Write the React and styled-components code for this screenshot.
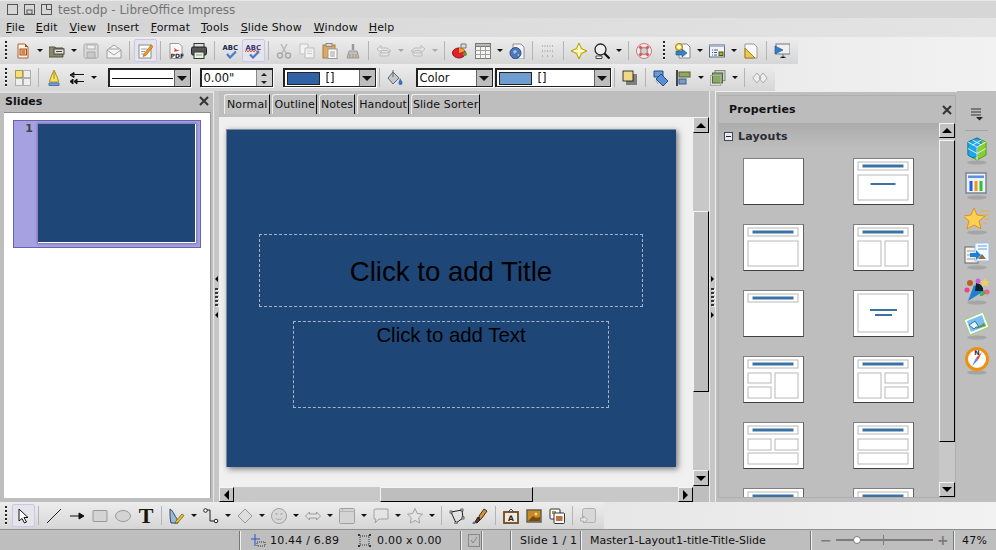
import React from "react";
import styled, { createGlobalStyle } from "styled-components";

const Global = createGlobalStyle`
  html, body { margin: 0; padding: 0; }
  body { width: 996px; height: 550px; overflow: hidden; font-family: "DejaVu Sans", sans-serif; font-size: 11px; color: #111; }
`;

const Window = styled.div`
  width: 996px;
  height: 550px;
  display: flex;
  flex-direction: column;
  overflow: hidden;
  background: #bebebe;
`;

const TitleBar = styled.div`
  height: 18px;
  display: flex;
  align-items: center;
  gap: 6px;
  padding-left: 7px;
  background: #d6d6d6;
  border-top: 1px solid #e8e8e8;
  box-sizing: border-box;
`;

const WinButton = styled.svg`
  width: 11px;
  height: 11px;
`;

const TitleText = styled.span`
  font-size: 12px;
  color: #747474;
`;

const MenuBar = styled.div`
  height: 19px;
  display: flex;
  align-items: center;
  padding-left: 6px;
  background: linear-gradient(90deg, #d2d2d2, #dcdcdc 45%, #e4e4e4);
`;

const MenuItem = styled.span`
  margin-right: ${(p) => p.$gap}px;
  font-size: 11px;
  letter-spacing: 0.1px;
  u { text-underline-offset: 1px; }
`;

const ToolRow = styled.div`
  flex: none;
  height: ${(p) => p.$height}px;
  background: linear-gradient(90deg, #dedede, #e6e6e6 60%, #f2f2f2);
`;

const Toolbar = styled.div`
  height: 100%;
  width: ${(p) => p.$width}px;
  display: flex;
  align-items: center;
  padding-left: 3px;
  box-sizing: border-box;
  background: linear-gradient(#ededed, #d6d6d6);
`;

const Grip = styled.div`
  flex: none;
  width: 2px;
  height: 20px;
  margin: 0 ${(p) => p.$right}px 0 ${(p) => p.$left}px;
  background: repeating-linear-gradient(#222 0 2px, #f4f4f4 2px 3px, transparent 3px 4px);
`;

const Tool = styled.div`
  flex: none;
  width: 23px;
  height: 23px;
  box-sizing: border-box;
  display: flex;
  align-items: center;
  justify-content: center;
  border: 1px solid ${(p) => (p.$on ? "#c9c9e6" : "transparent")};
  border-radius: 2px;
  background: ${(p) => (p.$on ? "#e4e4ea" : "transparent")};
`;

const ToolGlyph = styled.span`
  font-family: "Liberation Serif", serif;
  font-size: 22px;
  font-weight: bold;
  line-height: 16px;
  color: #1a1608;
`;

const Arrow = styled.div`
  flex: none;
  width: 11px;
  display: flex;
  justify-content: center;
  &::after {
    content: "";
    border-left: 3.5px solid transparent;
    border-right: 3.5px solid transparent;
    border-top: 3.5px solid ${(p) => (p.$off ? "#aaa" : "#111")};
  }
`;

const Sep = styled.div`
  flex: none;
  width: 8px;
  height: 19px;
  display: flex;
  justify-content: center;
  &::after {
    content: "";
    width: 1px;
    background: #b4b4b4;
  }
`;

const Field = styled.div`
  flex: none;
  width: ${(p) => p.$width}px;
  height: 19px;
  margin-left: ${(p) => p.$left || 0}px;
  box-sizing: border-box;
  display: flex;
  align-items: center;
  background: #fff;
  border: 1px solid #222;
  border-top-width: 2px;
  border-left-width: 2px;
  box-shadow: 1px 1px 0 #fff;
  font-size: 11.5px;
`;

const FieldBody = styled.div`
  flex: 1;
  min-width: 0;
  display: flex;
  align-items: center;
  gap: 6px;
  padding-left: 2px;
`;

const DropButton = styled.div`
  flex: none;
  width: 15px;
  height: 100%;
  display: flex;
  align-items: center;
  justify-content: center;
  background: #bdbdbd;
  border-left: 1px solid #666;
  &::after {
    content: "";
    border-left: 5px solid transparent;
    border-right: 5px solid transparent;
    border-top: 5px solid #111;
  }
`;

const SpinButtons = styled.div`
  flex: none;
  width: 15px;
  height: 100%;
  display: flex;
  flex-direction: column;
  background: #d0d0d0;
  border-left: 1px solid #888;
`;

const SpinPart = styled.div`
  flex: 1;
  display: flex;
  align-items: center;
  justify-content: center;
  &::after {
    content: "";
    border-left: 3px solid transparent;
    border-right: 3px solid transparent;
    ${(p) => (p.$up ? "border-bottom: 3px solid #222;" : "border-top: 3px solid #222;")}
  }
`;

const Swatch = styled.div`
  width: ${(p) => p.$width}px;
  height: 11px;
  background: ${(p) => p.$color};
  border: 1px solid #222;
`;

const LineSample = styled.div`
  flex: 1;
  height: 1px;
  background: #111;
  margin-right: 1px;
`;

const Main = styled.div`
  flex: none;
  height: 411px;
  display: flex;
`;

const SlidesPanel = styled.aside`
  flex: none;
  width: 213px;
  display: flex;
  flex-direction: column;
  border-top: 2px solid #e0e0e0;
  padding-right: 1px;
  box-sizing: border-box;
`;

const PanelHead = styled.div`
  height: 19px;
  display: flex;
  align-items: center;
  justify-content: space-between;
  padding: 0 3px 3px 5px;
  box-sizing: border-box;
  font-weight: bold;
  font-size: 11px;
`;

const CloseMark = styled.svg`
  width: 10px;
  height: 10px;
`;

const SlideList = styled.div`
  height: 386px;
  margin-left: 4px;
  margin-right: 1px;
  padding: 7px 9px;
  box-sizing: border-box;
  background: #fff;
  border-top: 1px solid #8c8c8c;
  border-right: 1px solid #9a9a9a;
`;

const SlideItem = styled.div`
  width: 188px;
  height: 128px;
  box-sizing: border-box;
  display: flex;
  justify-content: space-between;
  padding: 3px 4px 0 0;
  background: #a6a1e1;
  border: 1px solid #6a62b4;
`;

const SlideNum = styled.span`
  width: 19px;
  text-align: right;
  color: #444;
  font-weight: bold;
  font-size: 11px;
  line-height: 10px;
`;

const SlideThumb = styled.div`
  width: 158px;
  height: 119px;
  box-sizing: border-box;
  background: #1e4778;
  border-right: 1px solid #fff;
  border-bottom: 1px solid #fff;
  box-shadow: 0 0 2px 1px #7a76a8;
`;

const Splitter = styled.div`
  flex: none;
  width: 6px;
  display: flex;
  flex-direction: column;
  align-items: center;
  justify-content: center;
  gap: 2px;
  background: #c6c6c6;
  border-left: 1px solid #e8e8e8;
  box-sizing: border-box;
`;

const SplitDot = styled.div`
  width: 3px;
  height: 2px;
  background: #333;
  box-shadow: 1px 1px 0 #f0f0f0;
`;

const SplitArrow = styled.div`
  margin: ${(p) => (p.$end ? "4px 0 0" : "0 0 4px")};
  border-top: 3px solid transparent;
  border-bottom: 3px solid transparent;
  ${(p) => (p.$right ? "border-left: 3px solid #000;" : "border-right: 3px solid #000;")}
`;

const Center = styled.div`
  flex: none;
  width: 490px;
  display: flex;
  flex-direction: column;
`;

const TabBar = styled.div`
  height: 26px;
  display: flex;
  align-items: flex-end;
  gap: 2px;
  padding: 0 0 3px 5px;
  box-sizing: border-box;
`;

const Tab = styled.div`
  height: 20px;
  box-sizing: border-box;
  padding: 0 ${(p) => (p.$on ? 2 : 1)}px;
  display: flex;
  align-items: center;
  font-size: 11px;
  letter-spacing: 0.1px;
  background: ${(p) => (p.$on ? "#c4c4c4" : "#bebebe")};
  border-top: 1px solid #eee;
  border-left: 1px solid #eee;
  border-right: 1px solid #111;
  border-top-left-radius: 3px;
`;

const CenterBody = styled.div`
  height: 370px;
  display: flex;
`;

const Viewport = styled.div`
  flex: none;
  width: 474px;
  padding: 12px 0 0 7px;
  box-sizing: border-box;
  background: #f0f0f0;
`;

const Slide = styled.div`
  width: 450px;
  height: 338px;
  box-sizing: border-box;
  display: flex;
  flex-direction: column;
  align-items: center;
  padding: 104px 1px 0 0;
  gap: 14px;
  background: #1e4778;
  border-top: 1px solid #7c8aa0;
  border-left: 1px solid #7c8aa0;
  box-shadow: 2px 2px 6px #777;
`;

const Placeholder = styled.div`
  width: ${(p) => p.$width}px;
  height: ${(p) => p.$height}px;
  box-sizing: border-box;
  display: flex;
  justify-content: center;
  align-items: ${(p) => (p.$top ? "flex-start" : "center")};
  padding-top: ${(p) => p.$pad}px;
  border: 1px dashed #a6b4c8;
  font-family: "Liberation Sans", Arial, sans-serif;
  font-size: ${(p) => p.$size}px;
  color: #000;
`;

const VScroll = styled.div`
  flex: none;
  width: ${(p) => p.$width}px;
  height: ${(p) => p.$height}px;
  display: flex;
  flex-direction: column;
  background: #c8c8c8;
`;

const HScroll = styled.div`
  height: 15px;
  width: 474px;
  display: flex;
  background: #c8c8c8;
`;

const ScrollButton = styled.div`
  flex: none;
  width: ${(p) => p.$w}px;
  height: ${(p) => p.$h}px;
  box-sizing: border-box;
  display: flex;
  align-items: center;
  justify-content: center;
  background: #c2c2c2;
  border: 1px solid;
  border-color: #f4f4f4 #000 #000 #f4f4f4;
  &::after {
    content: "";
    ${(p) =>
      ({
        up: "border-left:5px solid transparent;border-right:5px solid transparent;border-bottom:5px solid #000;",
        down: "border-left:5px solid transparent;border-right:5px solid transparent;border-top:5px solid #000;",
        left: "border-top:5px solid transparent;border-bottom:5px solid transparent;border-right:5px solid #000;",
        right: "border-top:5px solid transparent;border-bottom:5px solid transparent;border-left:5px solid #000;",
      })[p.$dir]}
  }
`;

const VTrack = styled.div`
  flex: 1;
  display: flex;
  flex-direction: column;
  padding-top: ${(p) => p.$before}px;
  padding-bottom: ${(p) => p.$after}px;
`;

const ScrollThumb = styled.div`
  flex: 1;
  background: #bebebe;
  border: 1px solid;
  border-color: #f4f4f4 #000 #000 #f4f4f4;
`;

const HTrack = styled.div`
  flex: 1;
  display: flex;
  padding-left: ${(p) => p.$before}px;
  padding-right: ${(p) => p.$after}px;
`;

const Deck = styled.section`
  flex: none;
  width: 242px;
  display: flex;
  flex-direction: column;
  border-left: 1px solid #eee;
  border-top: 1px solid #eee;
  padding: 3px 1px 4px 2px;
  box-sizing: border-box;
`;

const DeckFrame = styled.div`
  flex: 1;
  min-height: 0;
  display: flex;
  flex-direction: column;
  border: 1px solid #aeaeae;
`;

const DeckHead = styled.div`
  flex: none;
  height: 27px;
  display: flex;
  align-items: center;
  justify-content: space-between;
  padding: 0 3px 0 10px;
  font-weight: bold;
  font-size: 11px;
  letter-spacing: 0.2px;
  background: #bcbcbc;
`;

const DeckBody = styled.div`
  flex: 1;
  min-height: 0;
  display: flex;
`;

const DeckContent = styled.div`
  flex: 1;
  min-width: 0;
  overflow: hidden;
`;

const SectionHead = styled.div`
  height: 26px;
  display: flex;
  align-items: center;
  gap: 5px;
  padding-left: 5px;
  font-weight: bold;
  font-size: 11px;
  letter-spacing: 0.2px;
  color: #2c2c34;
  background: linear-gradient(#acacac, #bebebe);
`;

const Minus = styled.div`
  width: 9px;
  height: 9px;
  box-sizing: border-box;
  display: flex;
  align-items: center;
  justify-content: center;
  background: #e6ecf2;
  border: 1px solid #445;
  &::after {
    content: "";
    width: 5px;
    height: 1px;
    background: #223;
  }
`;

const LayoutGrid = styled.div`
  display: grid;
  grid-template-columns: 61px 61px;
  grid-auto-rows: 47px;
  column-gap: 49px;
  row-gap: 19px;
  padding: 9px 0 0 24px;
`;

const LayoutThumb = styled.svg`
  width: 61px;
  height: 47px;
  display: block;
  box-sizing: border-box;
  background: #fff;
  border: 1px solid;
  border-color: #808080 #606060 #404040 #808080;
`;

const SideTabs = styled.nav`
  flex: none;
  width: 39px;
  display: flex;
  flex-direction: column;
  align-items: center;
  padding-top: 16px;
  box-sizing: border-box;
`;

const SideRule = styled.div`
  width: 23px;
  height: 1px;
  margin: 9px 0 6px;
  background: #a4a4a4;
`;

const SideIcon = styled.svg`
  width: 26px;
  height: 28px;
  margin-bottom: 7px;
`;

const StatusBar = styled.footer`
  flex: none;
  height: 21px;
  display: flex;
  align-items: center;
  background: #bebebe;
  border-top: 1px solid #8e8e8e;
  box-sizing: border-box;
  font-size: 11px;
`;

const Cell = styled.div`
  flex: none;
  width: ${(p) => p.$width}px;
  height: 19px;
  box-sizing: border-box;
  display: flex;
  align-items: center;
  padding-left: ${(p) => p.$pad || 0}px;
  letter-spacing: ${(p) => (p.$tight ? 0 : 0.2)}px;
  border-right: ${(p) => (p.$plain ? "none" : "1px solid #f0f0f0")};
  box-shadow: ${(p) => (p.$plain ? "none" : "inset -1px 0 0 #777")};
`;

const StatusIcon = styled.svg`
  flex: none;
  margin-left: ${(p) => p.$left || 0}px;
`;

const StatusText = styled.span`
  margin-left: ${(p) => p.$left}px;
`;

const ZoomRail = styled.div`
  flex: none;
  width: 97px;
  height: 2px;
  margin: 0 4px;
  position: relative;
  background: #7c7c7c;
`;

const ZoomKnob = styled.div`
  position: absolute;
  left: 17px;
  top: -3px;
  width: 8px;
  height: 8px;
  border-radius: 50%;
  background: #fff;
  border: 1px solid #7c7c7c;
  box-sizing: border-box;
`;

const ZoomTick = styled.div`
  position: absolute;
  left: 47px;
  top: -4px;
  width: 1px;
  height: 10px;
  background: #7c7c7c;
`;

const ZoomSign = styled.span`
  width: 12px;
  text-align: center;
  font-size: 14px;
  font-weight: bold;
  color: #7c7c7c;
  line-height: 1;
`;

const paths = {
  new: (
    <>
      <path d="M3 1h7l3 3v11H3z" fill="#fbf4ea" stroke="#b0602a" />
      <path d="M10 1l3 3h-3z" fill="#8c4a20" />
      <rect x="5" y="6" width="6.500" height="6" fill="#f0c090" stroke="#a8501c" />
      <path d="M6.500 8h3.500M6.500 10h3.500" stroke="#a8501c" />
    </>
  ),
  open: (
    <>
      <path d="M0 4h6l1 1h7v9H0z" fill="#8a8a6a" stroke="#55553f" />
      <rect x="5" y="6" width="10" height="5" fill="#e4e4dc" stroke="#444" />
      <path d="M7 8.500h6" stroke="#444" />
    </>
  ),
  save: (
    <>
      <rect x="1" y="1" width="14" height="14" rx="1.500" fill="#dcdcdc" stroke="#a8a8a8" />
      <rect x="4" y="2" width="8" height="4" fill="#f0f0f0" stroke="#b0b0b0" />
      <rect x="4" y="9" width="8" height="6" fill="#c8c8c8" stroke="#a8a8a8" />
    </>
  ),
  mail: (
    <>
      <path d="M1 7l7-5 7 5v8H1z" fill="#f4f4f4" stroke="#a0a0a0" />
      <path d="M1 7l7 5 7-5M3 6h10" fill="none" stroke="#a0a0a0" />
    </>
  ),
  edit: (
    <>
      <rect x="2" y="2" width="12" height="13" fill="#fff" stroke="#8a8a8a" />
      <path d="M4 6h6M4 8.500h4M4 11h3" stroke="#a0a0a0" />
      <path d="M7 11l7-9 2 1.500-7 9-3 1z" fill="#f09a1c" stroke="#9a5a10" strokeWidth="0.600" />
    </>
  ),
  pdf: (
    <>
      <path d="M2 0.500h9l3 3v12H2z" fill="#fafafa" stroke="#9a9a9a" />
      <path d="M4 2c3 4 5 5 8 6-3 0-4 0-6 1 1-2 1-4-2-7z" fill="#e04030" />
      <text x="2.500" y="14.500" fontSize="6" fontWeight="bold" fontFamily="DejaVu Sans" fill="#222">PDF</text>
    </>
  ),
  print: (
    <>
      <rect x="3" y="0.500" width="10" height="5" fill="#ddd" stroke="#333" />
      <rect x="0.500" y="4" width="15" height="8" rx="1.500" fill="#555" stroke="#222" />
      <rect x="3" y="9" width="10" height="6.500" fill="#e4f0e0" stroke="#333" />
      <path d="M5 12h6" stroke="#7ab070" />
    </>
  ),
  abc: (
    <>
      <text x="0.500" y="7" fontSize="6.800" fontWeight="bold" fontFamily="DejaVu Sans" fill="#1a2a50">ABC</text>
      <path d="M5 11l3 3.500 6-6" fill="none" stroke="#4a7ac8" strokeWidth="2.200" />
    </>
  ),
  abc2: (
    <>
      <text x="0.500" y="6.500" fontSize="6.800" fontWeight="bold" fontFamily="DejaVu Sans" fill="#3a3a70">ABC</text>
      <path d="M0 8.500l1.500-1 1.500 1 1.500-1 1.500 1 1.500-1 1.500 1 1.500-1 1.500 1 1.500-1" fill="none" stroke="#d03030" />
      <path d="M5 11.500l3 3 6-6" fill="none" stroke="#4a7ac8" strokeWidth="2.200" />
    </>
  ),
  cut: (
    <>
      <path d="M5 1l5 9M11 1l-5 9" stroke="#b8b8b8" strokeWidth="1.500" />
      <circle cx="4" cy="12.500" r="2.500" fill="none" stroke="#a8a8a8" strokeWidth="1.400" />
      <circle cx="12" cy="12.500" r="2.500" fill="none" stroke="#a8a8a8" strokeWidth="1.400" />
    </>
  ),
  copy: (
    <>
      <path d="M1 1h8v10H1z" fill="#f2f2f2" stroke="#c0c0c0" />
      <path d="M6 5h9v10H6z" fill="#f2f2f2" stroke="#bcbcbc" />
      <path d="M8 8h5M8 10.500h5" stroke="#ccc" />
    </>
  ),
  paste: (
    <>
      <rect x="1" y="2" width="12" height="13" fill="#e0a860" stroke="#a87a40" />
      <rect x="4" y="0.500" width="6" height="3" fill="#d8d8d8" stroke="#888" />
      <rect x="6" y="6" width="9" height="9.500" fill="#fff" stroke="#999" />
      <path d="M8 9h5M8 11h5M8 13h5" stroke="#999" />
    </>
  ),
  clone: (
    <>
      <path d="M8 1v6" stroke="#999" strokeWidth="2.500" />
      <path d="M4 8h8l2 7H2z" fill="#c8bcb0" stroke="#999" />
      <path d="M5 11v4M8 11v4M11 11v4" stroke="#999" />
    </>
  ),
  undo: <path d="M1 6l4-3.500V5h6l4 3-2 1-2-1.500H5V10z M4 10h7l2-1v3l-2 1H4z" fill="#e4e4e4" stroke="#bcbcbc" />,
  redo: <path d="M15 6l-4-3.500V5H5L1 8l2 1 2-1.500h6V10z M12 10H5L3 9v3l2 1h7z" fill="#e4e4e4" stroke="#bcbcbc" />,
  chart: (
    <>
      <ellipse cx="7" cy="10" rx="6.500" ry="5" fill="#e0202c" stroke="#901018" />
      <path d="M7 10V5a6.500 5 0 0 1 6 3z" fill="#f0a020" />
      <path d="M9 1h5v4H9z" fill="#ddd" stroke="#777" />
      <circle cx="13" cy="11" r="2" fill="#50a040" />
    </>
  ),
  table: (
    <>
      <rect x="0.500" y="0.500" width="15" height="15" fill="#f6f6f0" stroke="#777" />
      <rect x="0.500" y="0.500" width="15" height="3" fill="#b8b8b0" stroke="#777" />
      <path d="M5.500 3.500v12M10.500 3.500v12M0.500 7.500h15M0.500 11.500h15" stroke="#a0a0a0" />
    </>
  ),
  link: (
    <>
      <path d="M4 1h8l3 3v12H4z" fill="#f4f4f4" stroke="#909090" />
      <circle cx="6.500" cy="10" r="5.500" fill="#4a78b8" stroke="#2a5088" />
      <path d="M4 8l3-1 1 2-3 2zM8 12l2-1v2z" fill="#a8c4e8" />
    </>
  ),
  grid: (
    <path
      d="M2 3h1M7 3h1M12 3h1M2 8h1M7 8h1M12 8h1M2 13h1M7 13h1M12 13h1M4.500 3h1M9.500 3h1M4.500 8h1M9.500 8h1"
      stroke="#888"
      strokeWidth="1"
    />
  ),
  spark: (
    <>
      <path d="M8 0l2.500 5.500L16 8l-5.500 2.500L8 16l-2.500-5.500L0 8l5.500-2.500z" fill="#f8e860" stroke="#b09a10" />
      <path d="M8 3v10M3 8h10" stroke="#fffbd0" strokeWidth="2" />
    </>
  ),
  zoom: (
    <>
      <circle cx="6.500" cy="6.500" r="5.500" fill="#eee" stroke="#222" strokeWidth="1.300" />
      <path d="M10.500 10.500l5 5" stroke="#111" strokeWidth="2.200" />
      <path d="M2 13h6v2.500H2z" fill="#fff" stroke="#444" />
    </>
  ),
  help: (
    <>
      <circle cx="8" cy="8" r="6.500" fill="none" stroke="#f4ecec" strokeWidth="3" />
      <path d="M3.400 3.400l2.200 2.200M12.600 3.400l-2.200 2.200M3.400 12.600l2.200-2.200M12.600 12.600l-2.200-2.200" stroke="#e85050" strokeWidth="2.800" />
      <circle cx="8" cy="8" r="7.500" fill="none" stroke="#a05050" strokeWidth="0.700" />
      <circle cx="8" cy="8" r="3.500" fill="#d0d0d0" stroke="#a05050" strokeWidth="0.700" />
    </>
  ),
  nav: (
    <>
      <path d="M4 1h8l3 3v11H4z" fill="#f8f8f8" stroke="#888" />
      <circle cx="4" cy="4" r="3.500" fill="#f8d840" stroke="#a08010" />
      <path d="M4 2v4M2 4h4" stroke="#fff" strokeWidth="1.400" />
      <path d="M1 8h6V6l5 4-5 4v-2H1z" fill="#3a80c8" stroke="#1c5090" strokeWidth="0.600" />
    </>
  ),
  dialog: (
    <>
      <rect x="0.500" y="2" width="15" height="12" fill="#f4f4f8" stroke="#5a6a80" />
      <path d="M0.500 2h15v2h-15z" fill="#a8b8cc" />
      <path d="M3 7h1M3 9.500h1M3 12h1" stroke="#3060a0" />
      <path d="M5 7h4M5 9.500h3M5 12h3" stroke="#3060a0" />
      <rect x="10" y="9" width="4" height="3.500" fill="#b8b020" stroke="#505010" />
    </>
  ),
  master: (
    <>
      <path d="M2 1h9l3 3v11H2z" fill="#f8f8f8" stroke="#9a9a9a" />
      <path d="M2 5v10h10z" fill="#ecc850" stroke="#a08020" />
    </>
  ),
  show: (
    <>
      <rect x="2" y="1" width="14" height="10" fill="#f0f0f0" stroke="#6a7a88" />
      <path d="M1 3l8 4-8 4z" fill="#2f80c8" stroke="#1a4a80" strokeWidth="0.600" />
      <path d="M9 11v2M6 15l3-2 3 2" stroke="#6a7a88" />
    </>
  ),
  tiles: (
    <>
      <rect x="0.500" y="0.500" width="7" height="7" fill="#f6e070" stroke="#a89a50" />
      <rect x="8.500" y="0.500" width="7" height="7" fill="#eee" stroke="#b0b0b0" />
      <rect x="0.500" y="8.500" width="7" height="7" fill="#eee" stroke="#b0b0b0" />
      <rect x="8.500" y="8.500" width="7" height="7" fill="#eee" stroke="#b0b0b0" />
    </>
  ),
  pen: (
    <>
      <path d="M8 0l3.500 8 1 4h-9l1-4z" fill="#f8e060" stroke="#a89020" />
      <path d="M8 2v7" stroke="#a89020" />
      <path d="M3 13h10v2.500H3z" fill="#7aa0d8" stroke="#4a70a8" />
    </>
  ),
  arrows: <path d="M1 5l4-2.500v2h10M1 5l4 2.500v-2M1 11.500l3-2.500 0 5zM5 11.500l3-2.500v5zM8 11.500h7" fill="#111" stroke="#111" />,
  bucket: (
    <>
      <path d="M6 2L1 8l5 6 6-6z" fill="#c0c8cc" stroke="#667" />
      <path d="M6 0v7" stroke="#667" />
      <path d="M13 8c1.500 2.500 2.500 3.500 2.500 5a2 2 0 0 1-4 0c0-1.500 1-2.500 1.500-5z" fill="#3a70b8" />
    </>
  ),
  shade: (
    <>
      <rect x="4" y="4" width="11" height="11" fill="#555" opacity="0.700" />
      <rect x="1" y="1" width="10" height="10" fill="#f0d888" stroke="#111" strokeWidth="0.800" />
    </>
  ),
  turn: (
    <>
      <path d="M1 1h9v6H1z" fill="#6a9ad0" stroke="#1f4f90" />
      <path d="M8 4l7 7-5 5-7-7z" fill="#5a8ed0" stroke="#1f4f90" />
      <path d="M3 10l2 4" stroke="#9ab" />
    </>
  ),
  align: (
    <>
      <path d="M1 0v16" stroke="#111" strokeWidth="1.500" />
      <rect x="3" y="2" width="11" height="5" fill="#90a860" stroke="#506030" />
      <rect x="3" y="9" width="7" height="5" fill="#7a9ac8" stroke="#3a5a88" />
    </>
  ),
  arrange: (
    <>
      <rect x="5" y="0.500" width="10" height="10" fill="#ccc" stroke="#888" />
      <rect x="2.500" y="3" width="10" height="10" fill="#8aa868" stroke="#506838" />
      <rect x="0.500" y="5.500" width="10" height="10" fill="none" stroke="#aaa" />
    </>
  ),
  connect: <path d="M5 3L0.800 8 5 13l4-5z M11 3L7 8l4 5 4.200-5z" fill="#eee" stroke="#aaa" />,
  cursor: <path d="M4 1v12l3-2.500 2.500 4.500 2-1-2.500-4.500h4z" fill="#fff" stroke="#111" />,
  line: <path d="M1 15L15 1" stroke="#222" />,
  lineArrow: <path d="M1 8h9M10 5l5 3-5 3z" fill="#111" stroke="#111" />,
  rect: <rect x="1" y="2.500" width="14" height="11" rx="0.500" fill="#d4d4d4" stroke="#999" />,
  ellipse: <ellipse cx="8" cy="8" rx="7.500" ry="5.500" fill="#d4d4d4" stroke="#999" />,
  curve: (
    <>
      <path d="M1 1c0 6 0 10 1 14h7c0-4-2-5-4-9C4 4 3 2 1 1z" fill="#9ab8d8" stroke="#33475e" />
      <path d="M7 13l6-7 2 1.500-6 7-3 1z" fill="#f0c010" stroke="#443" strokeWidth="0.600" />
    </>
  ),
  connector: (
    <>
      <path d="M3 2h4v11h6" fill="none" stroke="#222" />
      <circle cx="2.500" cy="2.500" r="1.800" fill="#fff" stroke="#222" />
      <circle cx="13" cy="13" r="1.800" fill="#fff" stroke="#222" />
    </>
  ),
  diamond: <path d="M8 1l7 7-7 7-7-7z" fill="#ddd" stroke="#999" />,
  smile: (
    <>
      <circle cx="8" cy="8" r="7.500" fill="#d8d8d8" stroke="#a0a0a0" />
      <circle cx="5.500" cy="6" r="1" fill="#aaa" />
      <circle cx="10.500" cy="6" r="1" fill="#aaa" />
      <path d="M4.500 10c2 2 5 2 7 0" fill="none" stroke="#aaa" />
    </>
  ),
  double: <path d="M0.500 8l4-4v2h7V4l4 4-4 4v-2h-7v2z" fill="#e4e4e4" stroke="#999" />,
  card: (
    <>
      <rect x="0.500" y="0.500" width="15" height="15" rx="1" fill="#d4d4d4" stroke="#a0a0a0" />
      <path d="M0.500 3.500h15M3.500 0.500v3" stroke="#b4b4b4" />
    </>
  ),
  callout: <path d="M2 1h13v10H6l-4 4 1-4H1V2z" fill="#e4e4e4" stroke="#a0a0a0" />,
  star: <path d="M8 0.500l2.300 5 5.200.700-3.800 3.600 1 5.200L8 12.500 3.300 15l1-5.200L.5 6.200l5.200-.700z" fill="#e4e4e4" stroke="#a0a0a0" />,
  points: (
    <>
      <path d="M2 4l11-2 1 8-7 5z" fill="none" stroke="#222" />
      <rect x="1" y="3" width="2" height="2" fill="#fff" stroke="#111" strokeWidth="0.600" />
      <rect x="12" y="1" width="2" height="2" fill="#fff" stroke="#111" strokeWidth="0.600" />
      <rect x="13" y="9" width="2" height="2" fill="#fff" stroke="#111" strokeWidth="0.600" />
      <rect x="6" y="14" width="2" height="2" fill="#fff" stroke="#111" strokeWidth="0.600" />
    </>
  ),
  glue: (
    <>
      <path d="M7 8l5-7 3 2-5 7-2 2z" fill="#d89030" stroke="#332" />
      <path d="M6 9l2 3-3 3-2-1z" fill="#7a2a1a" stroke="#221" />
      <circle cx="2" cy="15" r="1.500" fill="#4a7ac0" />
    </>
  ),
  frame: (
    <>
      <rect x="1" y="4" width="14" height="11" fill="#f0e8d8" stroke="#6a4a28" strokeWidth="1.800" />
      <path d="M5 4l3-3 3 3" fill="none" stroke="#444" />
      <text x="8" y="12.700" textAnchor="middle" fontSize="7.500" fontWeight="bold" fontFamily="DejaVu Sans" fill="#222">A</text>
    </>
  ),
  photo: (
    <>
      <rect x="1" y="2" width="14" height="12" fill="#c88a28" stroke="#5a5a50" strokeWidth="1.400" />
      <path d="M2 13l5-5 3 2 4-1v4z" fill="#7a4a14" />
      <circle cx="10" cy="6" r="1.500" fill="#f4e060" />
    </>
  ),
  stack: (
    <>
      <rect x="1" y="1" width="10" height="10" rx="1" fill="#fff" stroke="#333" />
      <rect x="3" y="3" width="4" height="3" fill="#b89040" />
      <rect x="5" y="5" width="10.500" height="10.500" rx="1" fill="#fff" stroke="#333" />
      <rect x="7" y="8" width="6.500" height="5" fill="#c07040" />
    </>
  ),
  ghost: (
    <>
      <rect x="2.500" y="0.500" width="13" height="14" rx="2" fill="#d8d8d8" stroke="#b0b0b0" />
      <path d="M0.500 10h3V8l4 3.500-4 3.500v-2h-3z" fill="#e4e4e4" stroke="#b0b0b0" />
    </>
  ),
};

const sidePaths = [
  <>
    <path d="M13 1l9 4v13l-9 5-9-5V5z" fill="#84d030" stroke="#58a018" />
    <path d="M13 1L4 5v13l5 3 4-2V10l4-3V3z" fill="#1ea8ea" stroke="#0f78b8" />
    <path d="M4 5l9 5 9-5M13 10v13M4 11.500l9 5 9-5M8.500 3l9 5M17.500 3l-9 5" fill="none" stroke="#e8f6ff" strokeWidth="0.900" />
  </>,
  <>
    <rect x="2" y="1" width="20" height="20" fill="#f0f2f8" stroke="#7a8498" strokeWidth="1.500" />
    <rect x="4" y="3.500" width="16" height="2.500" fill="#5a90e0" />
    <path d="M7 9v10" stroke="#2060e0" strokeWidth="3" />
    <path d="M12 9v10" stroke="#f09a10" strokeWidth="3" />
    <path d="M17 9v10" stroke="#30c030" strokeWidth="3" />
  </>,
  <>
    <path d="M10 1l3 7 8 1-6 5 2 8-7-4-7 4 2-8-6-5 8-1z" fill="#fcd050" stroke="#e09020" />
    <path d="M16 4h9M18 8h7M20 12h5M19 16h4" stroke="#f0a840" />
  </>,
  <>
    <rect x="1" y="5" width="13" height="16" fill="#f4f4f4" stroke="#666" />
    <path d="M3 9h8M3 13h4M3 17h8" stroke="#999" />
    <rect x="11" y="1" width="14" height="18" fill="#f4f8ff" stroke="#a0c0e8" />
    <path d="M14 4h9M14 7h9" stroke="#60a0e0" />
    <path d="M14 17l4-5 4 5z" fill="#907040" />
    <path d="M6 11h6V8l5 5-5 5v-3H6z" fill="#1a80d8" />
  </>,
  <>
    <path d="M4 24l6-16 10 6z" fill="#2080d0" />
    <path d="M12 6c4 0 8 4 7 8l-8 0z" fill="#132030" />
    <path d="M16 19c4 0 6-2 6-6l-3 1c0 2-2 3-3 2z" fill="#50b040" />
    <circle cx="6" cy="6" r="3" fill="#c06020" />
    <circle cx="14" cy="4" r="2.500" fill="#d060d0" />
    <path d="M21 1l1.500 3 3 .5-2 2 .5 3-3-1.500-3 1.500.5-3-2-2 3-.5z" fill="#f0d060" />
    <circle cx="3" cy="13" r="2.500" fill="#f04080" />
    <circle cx="23" cy="15" r="2.500" fill="#f06090" />
  </>,
  <>
    <path d="M0 8L19 0l6 15L6 23z" fill="#fff" stroke="#9ad06a" />
    <path d="M3 9L18 3l4 11L7 20z" fill="#7ac0f0" />
    <path d="M11 17l9-6 2 3z" fill="#60a030" />
    <path d="M5 13l6-4 4 6h-3l-2 2z" fill="#e8f4ff" stroke="#2a70b8" />
  </>,
  <>
    <circle cx="13" cy="12" r="10.500" fill="#fff" stroke="#f09010" strokeWidth="3" />
    <path d="M18 5l-4 8-2-2z" fill="#e84030" />
    <path d="M8 19l4-8 2 2z" fill="#4a90e0" />
    <text x="13" y="7.500" textAnchor="middle" fontSize="6.500" fontWeight="bold" fontFamily="DejaVu Sans" fill="#334">N</text>
  </>,
];

const row1 = [
  "grip", "new", "a", "open", "a", "save", "mail", "|", "edit*", "|", "pdf", "print", "|", "abc", "abc2*", "|",
  "cut", "copy", "paste", "clone", "|", "undo", "a-", "redo", "a-", "|", "chart", "table", "a", "link", "|", "grid", "|",
  "spark", "zoom", "a", "|", "help", "gripR", "nav", "a", "dialog", "a", "master", "|", "show",
];

const row3 = [
  "grip", "cursor*", "|", "line", "lineArrow", "rect", "ellipse", "T", "|", "curve", "a", "connector", "a",
  "diamond", "a", "smile", "a", "double", "a", "card", "a", "callout", "a", "star", "a", "|", "points", "glue", "|",
  "frame", "photo", "stack", "|", "ghost",
];

const Icon = ({ name }) => (
  <svg width="16" height="16" viewBox="0 0 16 16">
    {paths[name]}
  </svg>
);

const ToolItems = ({ items }) =>
  items.map((item, i) => {
    if (item === "grip") return <Grip key={i} $left={2} $right={4.5} />;
    if (item === "gripR") return <Grip key={i} $left={7} $right={7} />;
    if (item === "|") return <Sep key={i} />;
    if (item === "a") return <Arrow key={i} />;
    if (item === "a-") return <Arrow key={i} $off />;
    if (item === "T") return <Tool key={i}><ToolGlyph>T</ToolGlyph></Tool>;
    const on = item.endsWith("*");
    return (
      <Tool key={i} $on={on}>
        <Icon name={on ? item.slice(0, -1) : item} />
      </Tool>
    );
  });

const T = [5, 4, 50, 8];
const bar = [9.5, 6.5, 41, 3];
const layouts = [
  { boxes: [], bars: [] },
  { boxes: [T, [5, 17, 50, 25]], bars: [bar, [17.5, 25, 25, 2]] },
  { boxes: [T, [5, 17, 50, 25]], bars: [bar] },
  { boxes: [T, [5, 17, 23, 25], [32, 17, 23, 25]], bars: [bar] },
  { boxes: [T], bars: [bar] },
  { boxes: [[5, 4, 50, 38]], bars: [[17, 19, 27, 2], [22, 24, 17, 2]] },
  { boxes: [T, [5, 17, 23, 10], [5, 31, 23, 11], [32, 17, 23, 25]], bars: [bar] },
  { boxes: [T, [5, 17, 23, 25], [32, 17, 23, 10], [32, 31, 23, 11]], bars: [bar] },
  { boxes: [T, [5, 17, 23, 11], [32, 17, 23, 11], [5, 31, 50, 11]], bars: [bar] },
  { boxes: [T, [5, 17, 50, 11], [5, 31, 50, 11]], bars: [bar] },
  { boxes: [T], bars: [bar] },
  { boxes: [T], bars: [bar] },
];

const menus = [
  ["F", "ile", 11],
  ["E", "dit", 12],
  ["V", "iew", 11],
  ["I", "nsert", 11.5],
  ["F", "ormat", 11],
  ["T", "ools", 12],
  ["S", "lide Show", 12],
  ["W", "indow", 11],
  ["H", "elp", 0],
];

const Cross = () => (
  <CloseMark viewBox="0 0 10 10">
    <path d="M1 1l8 8M9 1l-8 8" stroke="#333" strokeWidth="2" />
  </CloseMark>
);

const SplitGrip = ({ right }) => (
  <Splitter>
    <SplitArrow $right={right} />
    <SplitDot />
    <SplitDot />
    <SplitDot />
    <SplitDot />
    <SplitDot />
    <SplitArrow $right={right} $end />
  </Splitter>
);

const App = () => {
  return (
    <Window>
      <Global />
      <TitleBar>
        <WinButton viewBox="0 0 11 11">
          <rect x="0.500" y="0.500" width="10" height="10" fill="none" stroke="#555" />
        </WinButton>
        <WinButton viewBox="0 0 11 11">
          <rect x="0.500" y="0.500" width="10" height="10" fill="none" stroke="#555" />
          <rect x="3" y="6" width="5" height="4" fill="none" stroke="#555" />
        </WinButton>
        <WinButton viewBox="0 0 11 11">
          <rect x="0.500" y="0.500" width="10" height="10" fill="none" stroke="#555" />
          <path d="M5.500 0.500v5h5" fill="none" stroke="#555" />
        </WinButton>
        <TitleText>test.odp - LibreOffice Impress</TitleText>
      </TitleBar>
      <MenuBar>
        {menus.map(([key, rest, gap]) => (
          <MenuItem key={key + rest} $gap={gap}>
            <u>{key}</u>
            {rest}
          </MenuItem>
        ))}
      </MenuBar>
      <ToolRow $height={27}>
        <Toolbar $width={798}>
          <ToolItems items={row1} />
        </Toolbar>
      </ToolRow>
      <ToolRow $height={27}>
        <Toolbar $width={775}>
          <ToolItems items={["grip", "tiles", "|", "pen", "arrows", "a"]} />
          <Field $width={83} $left={8}>
            <FieldBody>
              <LineSample />
            </FieldBody>
            <DropButton />
          </Field>
          <Field $width={73} $left={9}>
            <FieldBody>0.00"</FieldBody>
            <SpinButtons>
              <SpinPart $up />
              <SpinPart />
            </SpinButtons>
          </Field>
          <Field $width={93} $left={10}>
            <FieldBody>
              <Swatch $width={31} $color="#2f62a4" />
              []
            </FieldBody>
            <DropButton />
          </Field>
          <Sep />
          <Tool>
            <Icon name="bucket" />
          </Tool>
          <Field $width={77} $left={9}>
            <FieldBody>Color</FieldBody>
            <DropButton />
          </Field>
          <Field $width={116} $left={2}>
            <FieldBody>
              <Swatch $width={31} $color="#6f9dd0" />
              []
            </FieldBody>
            <DropButton />
          </Field>
          <Sep />
          <Tool>
            <Icon name="shade" />
          </Tool>
          <Sep />
          <Tool>
            <Icon name="turn" />
          </Tool>
          <Tool>
            <Icon name="align" />
          </Tool>
          <Arrow />
          <Tool>
            <Icon name="arrange" />
          </Tool>
          <Arrow />
          <Sep />
          <Tool>
            <Icon name="connect" />
          </Tool>
        </Toolbar>
      </ToolRow>
      <Main>
        <SlidesPanel>
          <PanelHead>
            Slides
            <Cross />
          </PanelHead>
          <SlideList>
            <SlideItem>
              <SlideNum>1</SlideNum>
              <SlideThumb />
            </SlideItem>
          </SlideList>
        </SlidesPanel>
        <SplitGrip />
        <Center>
          <TabBar>
            <Tab $on>Normal</Tab>
            <Tab>Outline</Tab>
            <Tab>Notes</Tab>
            <Tab>Handout</Tab>
            <Tab>Slide Sorter</Tab>
          </TabBar>
          <CenterBody>
            <Viewport>
              <Slide>
                <Placeholder $width={384} $height={73} $size={27.6} $pad={3}>
                  Click to add Title
                </Placeholder>
                <Placeholder $width={316} $height={87} $size={20.4} $pad={2} $top>
                  Click to add Text
                </Placeholder>
              </Slide>
            </Viewport>
            <VScroll $width={16} $height={369}>
              <ScrollButton $w={16} $h={16} $dir="up" />
              <VTrack $before={78} $after={78}>
                <ScrollThumb />
              </VTrack>
              <ScrollButton $w={16} $h={16} $dir="down" />
            </VScroll>
          </CenterBody>
          <HScroll>
            <ScrollButton $w={15} $h={15} $dir="left" />
            <HTrack $before={146} $after={145}>
              <ScrollThumb />
            </HTrack>
            <ScrollButton $w={15} $h={15} $dir="right" />
          </HScroll>
        </Center>
        <SplitGrip right />
        <Deck>
          <DeckFrame>
            <DeckHead>
              Properties
              <Cross />
            </DeckHead>
            <DeckBody>
              <DeckContent>
                <SectionHead>
                  <Minus />
                  Layouts
                </SectionHead>
                <LayoutGrid>
                  {layouts.map((layout, i) => (
                    <LayoutThumb key={i} viewBox="0 0 59 45">
                      {layout.boxes.map((b, j) => (
                        <rect key={j} x={b[0] - 1} y={b[1] - 1} width={b[2]} height={b[3]} fill="#fff" stroke="#b8b8b8" />
                      ))}
                      {layout.bars.map((b, j) => (
                        <rect key={j} x={b[0] - 1} y={b[1] - 1} width={b[2]} height={b[3]} fill="#3a72a6" />
                      ))}
                    </LayoutThumb>
                  ))}
                </LayoutGrid>
              </DeckContent>
              <VScroll $width={16} $height={374}>
                <ScrollButton $w={16} $h={15} $dir="up" />
                <VTrack $before={2} $after={40}>
                  <ScrollThumb />
                </VTrack>
                <ScrollButton $w={16} $h={15} $dir="down" />
              </VScroll>
            </DeckBody>
          </DeckFrame>
        </Deck>
        <SideTabs>
          <svg width="14" height="14" viewBox="0 0 14 14">
            <path d="M1 2h10M1 5h10M1 8h10" stroke="#333" />
            <path d="M6 10h7l-3.500 3.500z" fill="#223" />
          </svg>
          <SideRule />
          {sidePaths.map((icon, i) => (
            <SideIcon key={i} viewBox="0 0 26 28">
              <ellipse cx="13" cy="25.500" rx="10" ry="2" fill="#888" opacity="0.450" />
              {icon}
            </SideIcon>
          ))}
        </SideTabs>
      </Main>
      <ToolRow $height={27}>
        <Toolbar $width={604}>
          <ToolItems items={row3} />
        </Toolbar>
      </ToolRow>
      <StatusBar>
        <Cell $width={241} />
        <Cell $width={221} $pad={9}>
          <StatusIcon width="16" height="14" viewBox="0 0 16 14">
            <path d="M5 1v12M1 6h9" stroke="#2a50d0" />
            <path d="M7 9h8v4H7z" fill="none" stroke="#333" strokeDasharray="1 1" />
          </StatusIcon>
          <StatusText $left={4}>10.44 / 6.89</StatusText>
          <StatusIcon $left={18} width="15" height="15" viewBox="0 0 15 15">
            <path d="M3 3h9v9H3z" fill="none" stroke="#333" strokeDasharray="1 1" />
            <path d="M1 1h2v2H1zM12 1h2v2h-2zM1 12h2v2H1zM12 12h2v2h-2z" fill="#333" />
          </StatusIcon>
          <StatusText $left={5}>0.00 x 0.00</StatusText>
        </Cell>
        <Cell $width={21} $pad={6}>
          <StatusIcon width="12" height="13" viewBox="0 0 12 13">
            <rect x="0.500" y="0.500" width="11" height="12" fill="none" stroke="#888" />
            <path d="M3 6l2 3 4-6" fill="none" stroke="#888" />
          </StatusIcon>
        </Cell>
        <Cell $width={29} />
        <Cell $width={70} $pad={8}>Slide 1 / 1</Cell>
        <Cell $width={230} $pad={8} $tight>Master1-Layout1-title-Title-Slide</Cell>
        <Cell $width={143} $pad={8}>
          <ZoomSign>−</ZoomSign>
          <ZoomRail>
            <ZoomTick />
            <ZoomKnob />
          </ZoomRail>
          <ZoomSign>+</ZoomSign>
        </Cell>
        <Cell $width={41} $pad={7} $plain>47%</Cell>
      </StatusBar>
    </Window>
  );
};

export default App;
